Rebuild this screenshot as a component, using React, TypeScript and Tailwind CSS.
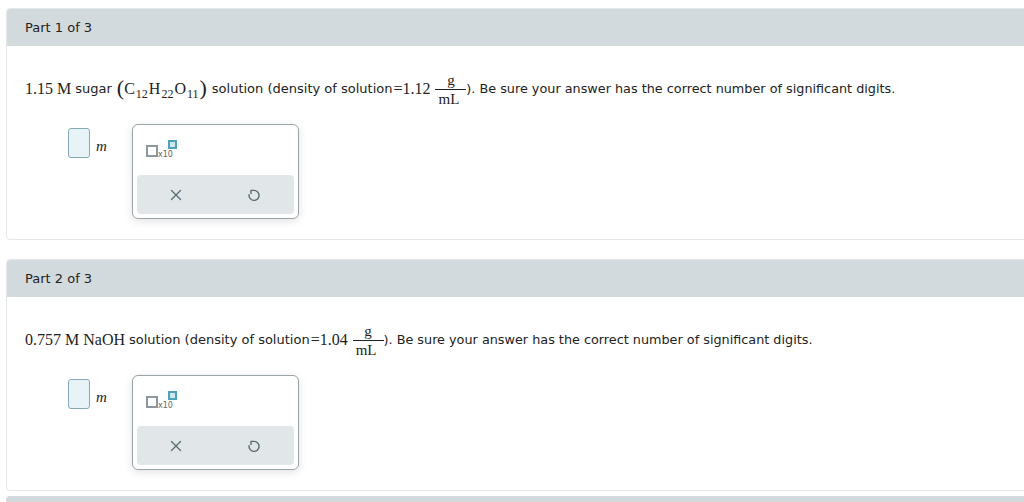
import React from "react";

const sans = { fontFamily: '"DejaVu Sans", Verdana, sans-serif' };
const serif = "font-['Liberation_Serif',serif] text-[16px]";

function Frac({ num, den }: { num: string; den: string }) {
  return (
    <span className="inline-flex flex-col items-center ml-[5px] font-['Liberation_Serif',serif] text-[15px] leading-[14px]">
      <span className="px-[6px] pb-[2px]">{num}</span>
      <span className="border-t border-[#222] pl-[3px] pr-[7px] pt-[2px] w-full text-center">{den}</span>
    </span>
  );
}

function Sub({ children }: { children: React.ReactNode }) {
  return <span className="inline-block text-[12px] relative top-[5px] mx-[1px]">{children}</span>;
}

function ResetIcon() {
  return (
    <svg width="14" height="16" viewBox="0 0 14 16" fill="none" stroke="#5a6b72" strokeWidth="1.4" strokeLinecap="round" strokeLinejoin="round">
      <path d="M4 6.4 V3.4 H7 A5 5 0 1 1 2.1 7.6" />
    </svg>
  );
}

function AnswerPanel() {
  return (
    <div className="flex items-start">
      <div className="w-[64px] mt-[4px] flex items-start">
        <div className="w-[22px] h-[30px] rounded-[3px] border border-[#86aab5] bg-[#e8f3f8]" />
        <span className="ml-[6px] mt-[11px] font-['Liberation_Serif',serif] italic text-[15px] leading-none text-[#222]">m</span>
      </div>
      <div className="w-[167px] h-[95px] rounded-[6px] border border-[#9aa5aa] bg-white shadow-[0_2px_8px_rgba(0,0,0,0.12)] p-[4px] flex flex-col">
        <div className="h-[45px] relative">
          <div className="absolute left-[9px] top-[16px] w-[12px] h-[12px] border-2 border-[#8c989d]" />
          <span className="absolute left-[21px] top-[22px] text-[8px] text-[#666] leading-none" style={sans}>x10</span>
          <div className="absolute left-[31px] top-[11px] w-[9px] h-[9px] border-2 border-[#4fa3b8] bg-[#cfe7ef]" />
        </div>
        <div className="mt-[1px] flex-1 rounded-[4px] bg-[#e1e6e8] flex items-center justify-around">
          <svg width="12" height="12" viewBox="0 0 12 12" stroke="#5a6b72" strokeWidth="1.3" strokeLinecap="round">
            <path d="M1.5 1.5 L10.5 10.5 M10.5 1.5 L1.5 10.5" />
          </svg>
          <ResetIcon />
        </div>
      </div>
    </div>
  );
}

function Card({ part, children }: { part: number; children: React.ReactNode }) {
  return (
    <div className="ml-[6px] w-[1040px] rounded-[4px] border border-[#e4e8e9] overflow-hidden bg-white">
      <div className="h-[37px] bg-[#d3dadd] flex items-center pl-[18px] text-[13px] text-[#222]" style={sans}>
        Part {part} of 3
      </div>
      <div className="pl-[18px] pt-[28px] pb-[20px]">{children}</div>
    </div>
  );
}

function Tail() {
  return (
    <span className="text-[12.8px]">). Be sure your answer has the correct number of significant digits.</span>
  );
}

export default function App() {
  return (
    <div className="w-[1024px] h-[502px] overflow-hidden bg-white text-[#222]" style={sans}>
      <div className="h-[8px]" />
      <Card part={1}>
        <div className="h-[30px] flex items-center text-[13px] whitespace-nowrap">
          <span className={serif}>1.15 M</span>
          <span className="ml-[4px]">sugar</span>
          <span className={`${serif} ml-[5px] flex items-center`}>
            <span className="text-[22px] leading-none font-light -mt-[2px]">(</span>
            C<Sub>12</Sub>H<Sub>22</Sub>O<Sub>11</Sub>
            <span className="text-[22px] leading-none font-light -mt-[2px]">)</span>
          </span>
          <span className="ml-[5px]">solution (density of solution</span>
          <span className={`${serif} ml-[1px]`}>=1.12</span>
          <Frac num="g" den="mL" />
          <Tail />
        </div>
        <div className="mt-[20px] ml-[43px]">
          <AnswerPanel />
        </div>
      </Card>
      <div className="h-[19px]" />
      <Card part={2}>
        <div className="h-[30px] flex items-center text-[13px] whitespace-nowrap">
          <span className={serif}>0.757 M NaOH</span>
          <span className="ml-[4px]">solution (density of solution</span>
          <span className={`${serif} ml-[1px]`}>=1.04</span>
          <Frac num="g" den="mL" />
          <Tail />
        </div>
        <div className="mt-[20px] ml-[43px]">
          <AnswerPanel />
        </div>
      </Card>
      <div className="h-[5px]" />
      <div className="ml-[6px] w-[1040px] h-[40px] rounded-t-[4px] bg-[#d3dadd]" />
    </div>
  );
}
